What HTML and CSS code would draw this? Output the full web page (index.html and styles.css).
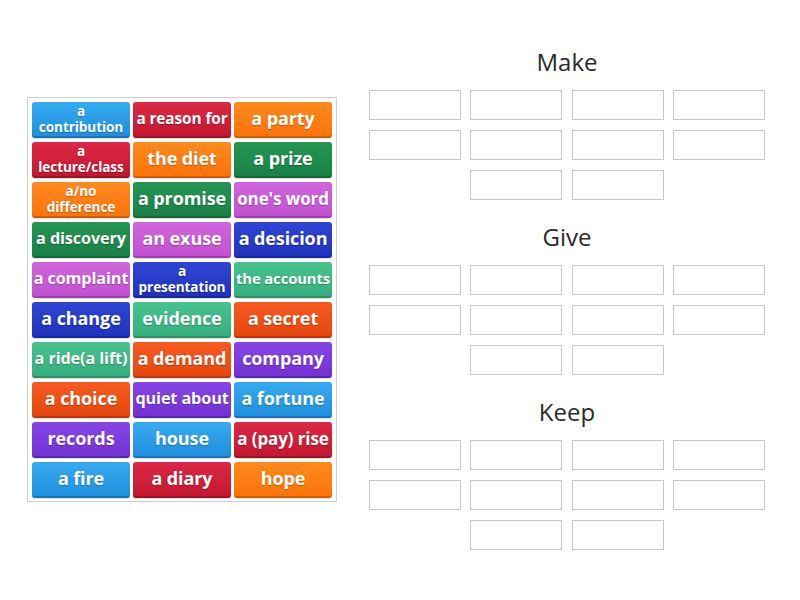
FILE: index.html
```html
<!DOCTYPE html>
<html lang="en">
<head>
<meta charset="utf-8">
<title>Make / Give / Keep</title>
<link rel="stylesheet" href="styles.css">
</head>
<body>
<div class="page">
  <div class="bank">
    <div class="tile blue two">a<br>contribution</div>
    <div class="tile red fs15">a reason for</div>
    <div class="tile orange">a party</div>

    <div class="tile red two">a<br>lecture/class</div>
    <div class="tile orange">the diet</div>
    <div class="tile dgreen">a prize</div>

    <div class="tile orange two">a/no<br>difference</div>
    <div class="tile dgreen">a promise</div>
    <div class="tile magenta fs17">one's word</div>

    <div class="tile dgreen fs16">a discovery</div>
    <div class="tile magenta">an exuse</div>
    <div class="tile dblue">a desicion</div>

    <div class="tile magenta fs16">a complaint</div>
    <div class="tile dblue two">a<br>presentation</div>
    <div class="tile teal fs14">the accounts</div>

    <div class="tile dblue">a change</div>
    <div class="tile teal">evidence</div>
    <div class="tile redorange">a secret</div>

    <div class="tile teal fs16">a ride(a lift)</div>
    <div class="tile redorange">a demand</div>
    <div class="tile purple">company</div>

    <div class="tile redorange">a choice</div>
    <div class="tile purple fs16">quiet about</div>
    <div class="tile blue">a fortune</div>

    <div class="tile purple">records</div>
    <div class="tile blue">house</div>
    <div class="tile red fs17">a (pay) rise</div>

    <div class="tile blue">a fire</div>
    <div class="tile red">a diary</div>
    <div class="tile orange">hope</div>
  </div>

  <div class="groups">
    <section class="group">
      <h2 class="group-title">Make</h2>
      <div class="slots">
        <div class="slot"></div><div class="slot"></div><div class="slot"></div><div class="slot"></div>
        <div class="slot"></div><div class="slot"></div><div class="slot"></div><div class="slot"></div>
        <div class="slot"></div><div class="slot"></div>
      </div>
    </section>
    <section class="group">
      <h2 class="group-title">Give</h2>
      <div class="slots">
        <div class="slot"></div><div class="slot"></div><div class="slot"></div><div class="slot"></div>
        <div class="slot"></div><div class="slot"></div><div class="slot"></div><div class="slot"></div>
        <div class="slot"></div><div class="slot"></div>
      </div>
    </section>
    <section class="group">
      <h2 class="group-title">Keep</h2>
      <div class="slots">
        <div class="slot"></div><div class="slot"></div><div class="slot"></div><div class="slot"></div>
        <div class="slot"></div><div class="slot"></div><div class="slot"></div><div class="slot"></div>
        <div class="slot"></div><div class="slot"></div>
      </div>
    </section>
  </div>
</div>
</body>
</html>
```

FILE: styles.css
```css
html, body {
  margin: 0;
  padding: 0;
  background: #ffffff;
}

body {
  font-family: "Open Sans", "Liberation Sans", sans-serif;
  width: 800px;
  height: 600px;
  overflow: hidden;
}

.page {
  display: flex;
  align-items: flex-start;
}

.bank {
  margin: 97px 0 0 27px;
  border: 1px solid #cfcfcf;
  padding: 4px 4px 3px 4px;
  display: grid;
  grid-template-columns: repeat(3, 98px);
  grid-auto-rows: 36px;
  column-gap: 3px;
  row-gap: 4px;
  background: #fff;
}

.tile {
  box-sizing: border-box;
  display: flex;
  align-items: center;
  justify-content: center;
  text-align: center;
  padding-bottom: 3px;
  border-radius: 3px;
  color: #ffffff;
  font-weight: 700;
  font-size: 18px;
  line-height: 1.15;
  white-space: nowrap;
  letter-spacing: -0.1px;
  text-shadow: 0 1px 1px rgba(0, 0, 0, 0.25);
  box-shadow: inset 0 -2px 0 rgba(0, 0, 0, 0.18), 0 1px 1px rgba(0, 0, 0, 0.15);
}

.tile.two {
  padding-bottom: 2px;
  font-size: 13.6px;
  line-height: 16px;
}
.tile.fs17 { font-size: 17px; }
.tile.fs16 { font-size: 16.2px; }
.tile.fs15 { font-size: 15.4px; }
.tile.fs14 { font-size: 14.8px; }

.blue      { background: linear-gradient(#36aaf0, #1d8fdc); }
.red       { background: linear-gradient(#dc2944, #c3162f); }
.orange    { background: linear-gradient(#ff8a1e, #fb7208); }
.dgreen    { background: linear-gradient(#249653, #1a7f45); }
.magenta   { background: linear-gradient(#d066dd, #c04fd0); }
.dblue     { background: linear-gradient(#2f45d4, #1f32bb); }
.teal      { background: linear-gradient(#48c28e, #35ae7b); }
.redorange { background: linear-gradient(#f75a20, #e5460c); }
.purple    { background: linear-gradient(#8646e6, #7230d4); }

.groups {
  margin-left: 32px;
  width: 396px;
  padding-top: 25px;
}

.group {
  margin-top: 22px;
}

.group-title {
  margin: 0 0 13px;
  font-size: 24px;
  font-weight: 400;
  line-height: 30px;
  text-align: center;
  color: #2a2a2a;
}

.slots {
  display: flex;
  flex-wrap: wrap;
  justify-content: center;
  column-gap: 9.33px;
  row-gap: 10px;
}

.slot {
  box-sizing: border-box;
  width: 92px;
  height: 30px;
  border: 1px solid #c8c8c8;
  background: #fff;
}
```
